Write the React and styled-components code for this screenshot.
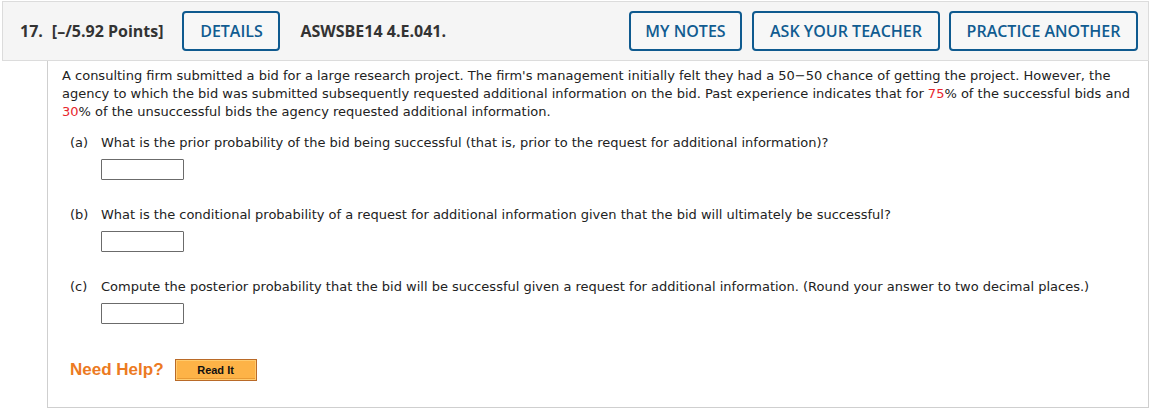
import styled, { createGlobalStyle } from "styled-components";

const GlobalStyle = createGlobalStyle`
  body {
    margin: 0;
    background: #fff;
  }
`;

const Page = styled.div`
  padding: 1px 2px 0 2px;
  width: 1147px;
`;

const Header = styled.div`
  display: flex;
  align-items: center;
  height: 58px;
  background: #f5f5f5;
  border: 1px solid #dcdcdc;
  font-family: "Open Sans", "Liberation Sans", sans-serif;
  font-weight: 700;
  font-size: 16px;
  color: #333;
  padding: 0 10px 0 17px;
`;

const Number = styled.span`
  margin-right: 9px;
`;

const Points = styled.span`
  margin-right: 19px;
`;

const Code = styled.span`
  margin-left: 20px;
  flex: 1;
`;

const HeaderButton = styled.button`
  height: 40px;
  width: ${(p) => p.w}px;
  padding: 0;
  margin-left: ${(p) => p.gap || 0}px;
  border: 2px solid #0f5a8f;
  border-radius: 4px;
  background: #f7f7f7;
  color: #115c91;
  font-family: "Open Sans", "Liberation Sans", sans-serif;
  font-weight: 600;
  font-size: 16px;
  cursor: pointer;
`;

const Body = styled.div`
  margin-left: 45px;
  border: 1px solid #cfcfcf;
  border-top: none;
  padding: 6px 14px 25px 14px;
  height: 315px;
  font-family: "DejaVu Sans", Verdana, sans-serif;
  font-size: 13px;
  color: #222;
`;

const Intro = styled.p`
  margin: 0;
  line-height: 18px;
`;

const Red = styled.span`
  color: #e8262c;
`;

const Part = styled.div`
  display: grid;
  grid-template-columns: 31px 1fr;
  padding-left: 8px;
  margin-top: ${(p) => p.top}px;
  line-height: 18px;
`;

const Answer = styled.input`
  grid-column: 2;
  margin-top: 7px;
  width: 83px;
  height: 21px;
  box-sizing: border-box;
  border: 1px solid #6b6b6b;
  border-radius: 1px;
  padding: 0;
`;

const Help = styled.div`
  display: flex;
  align-items: center;
  margin-top: 35px;
  padding-left: 8px;
`;

const HelpLabel = styled.span`
  font-family: "Liberation Sans", Arial, sans-serif;
  font-weight: 700;
  font-size: 17px;
  color: #ec7a22;
  margin-right: 11px;
`;

const ReadIt = styled.button`
  width: 82px;
  height: 22px;
  padding: 0;
  border: 1px solid #b96a28;
  background: #fdb347;
  box-shadow: inset 0 0 0 1px #ffcb6e, inset 0 -2px 0 #e99a34;
  font-family: "Liberation Sans", Arial, sans-serif;
  font-weight: 700;
  font-size: 11px;
  color: #111;
`;

const parts = [
  {
    label: "(a)",
    text: "What is the prior probability of the bid being successful (that is, prior to the request for additional information)?",
    top: 13,
  },
  {
    label: "(b)",
    text: "What is the conditional probability of a request for additional information given that the bid will ultimately be successful?",
    top: 26,
  },
  {
    label: "(c)",
    text: "Compute the posterior probability that the bid will be successful given a request for additional information. (Round your answer to two decimal places.)",
    top: 26,
  },
];

export default function App() {
  return (
    <Page>
      <GlobalStyle />
      <Header>
        <Number>17.</Number>
        <Points>[–/5.92 Points]</Points>
        <HeaderButton w={98}>DETAILS</HeaderButton>
        <Code>ASWSBE14 4.E.041.</Code>
        <HeaderButton w={113}>MY NOTES</HeaderButton>
        <HeaderButton w={188} gap={10}>ASK YOUR TEACHER</HeaderButton>
        <HeaderButton w={189} gap={9}>PRACTICE ANOTHER</HeaderButton>
      </Header>
      <Body>
        <Intro>
          A consulting firm submitted a bid for a large research project. The firm's management initially felt they
          had a 50−50 chance of getting the project. However, the agency to which the bid was submitted subsequently
          requested additional information on the bid. Past experience indicates that for <Red>75</Red>% of the
          successful bids and <Red>30</Red>% of the unsuccessful bids the agency requested additional information.
        </Intro>
        {parts.map((p) => (
          <Part key={p.label} top={p.top}>
            <span>{p.label}</span>
            <span>{p.text}</span>
            <Answer type="text" />
          </Part>
        ))}
        <Help>
          <HelpLabel>Need Help?</HelpLabel>
          <ReadIt>Read It</ReadIt>
        </Help>
      </Body>
    </Page>
  );
}
